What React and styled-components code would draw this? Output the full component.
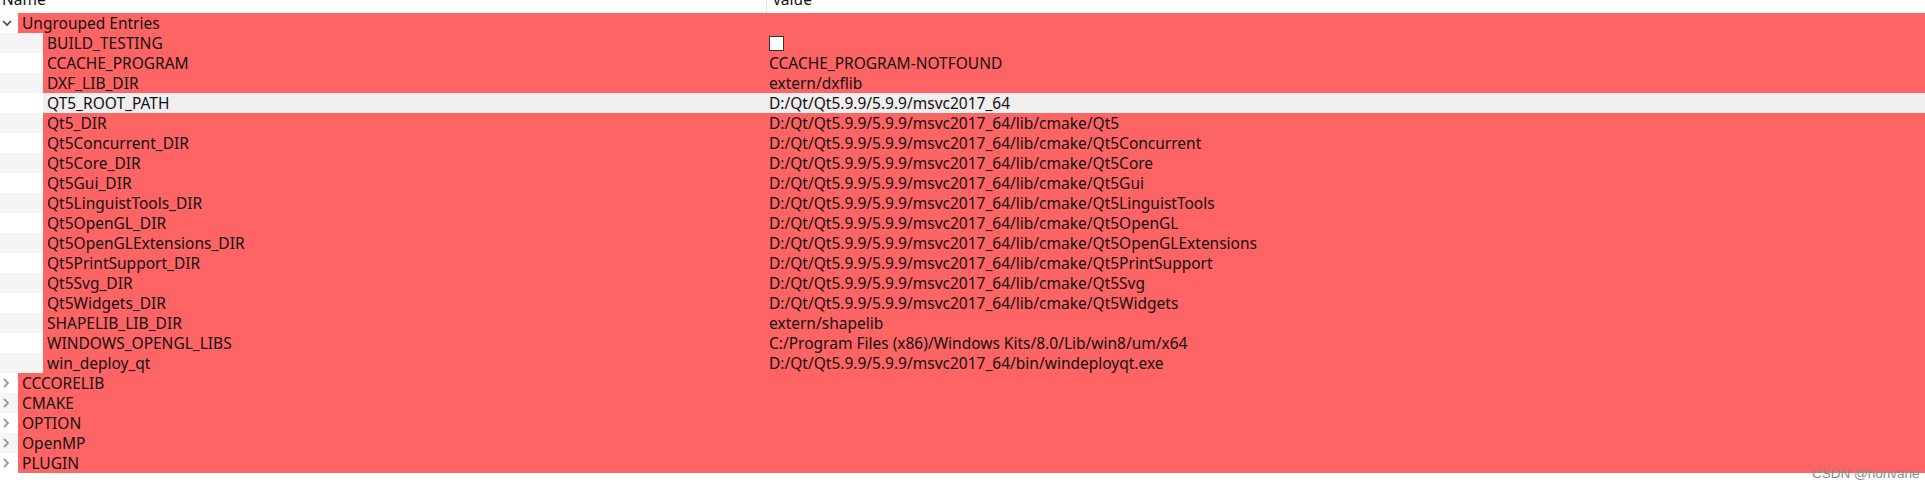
import React from 'react'
import styled, { createGlobalStyle } from 'styled-components'

const GlobalStyle = createGlobalStyle`
  html, body {
    margin: 0;
    padding: 0;
    background: #fff;
  }
  body {
    font-family: "Noto Sans", "Open Sans", sans-serif;
    font-size: 15.5px;
    color: #111;
  }
`

const NAME_COL = 766
const RED = '#ff6464'

const groups = [
  {
    name: 'Ungrouped Entries',
    open: true,
    entries: [
      { name: 'BUILD_TESTING', check: true },
      { name: 'CCACHE_PROGRAM', value: 'CCACHE_PROGRAM-NOTFOUND' },
      { name: 'DXF_LIB_DIR', value: 'extern/dxflib' },
      { name: 'QT5_ROOT_PATH', value: 'D:/Qt/Qt5.9.9/5.9.9/msvc2017_64', old: true },
      { name: 'Qt5_DIR', value: 'D:/Qt/Qt5.9.9/5.9.9/msvc2017_64/lib/cmake/Qt5' },
      { name: 'Qt5Concurrent_DIR', value: 'D:/Qt/Qt5.9.9/5.9.9/msvc2017_64/lib/cmake/Qt5Concurrent' },
      { name: 'Qt5Core_DIR', value: 'D:/Qt/Qt5.9.9/5.9.9/msvc2017_64/lib/cmake/Qt5Core' },
      { name: 'Qt5Gui_DIR', value: 'D:/Qt/Qt5.9.9/5.9.9/msvc2017_64/lib/cmake/Qt5Gui' },
      { name: 'Qt5LinguistTools_DIR', value: 'D:/Qt/Qt5.9.9/5.9.9/msvc2017_64/lib/cmake/Qt5LinguistTools' },
      { name: 'Qt5OpenGL_DIR', value: 'D:/Qt/Qt5.9.9/5.9.9/msvc2017_64/lib/cmake/Qt5OpenGL' },
      { name: 'Qt5OpenGLExtensions_DIR', value: 'D:/Qt/Qt5.9.9/5.9.9/msvc2017_64/lib/cmake/Qt5OpenGLExtensions' },
      { name: 'Qt5PrintSupport_DIR', value: 'D:/Qt/Qt5.9.9/5.9.9/msvc2017_64/lib/cmake/Qt5PrintSupport' },
      { name: 'Qt5Svg_DIR', value: 'D:/Qt/Qt5.9.9/5.9.9/msvc2017_64/lib/cmake/Qt5Svg' },
      { name: 'Qt5Widgets_DIR', value: 'D:/Qt/Qt5.9.9/5.9.9/msvc2017_64/lib/cmake/Qt5Widgets' },
      { name: 'SHAPELIB_LIB_DIR', value: 'extern/shapelib' },
      { name: 'WINDOWS_OPENGL_LIBS', value: 'C:/Program Files (x86)/Windows Kits/8.0/Lib/win8/um/x64' },
      { name: 'win_deploy_qt', value: 'D:/Qt/Qt5.9.9/5.9.9/msvc2017_64/bin/windeployqt.exe' },
    ],
  },
  { name: 'CCCORELIB' },
  { name: 'CMAKE' },
  { name: 'OPTION' },
  { name: 'OpenMP' },
  { name: 'PLUGIN' },
]

const Page = styled.div`
  position: relative;
  width: 1925px;
  height: 490px;
  overflow: hidden;
`

const Header = styled.div`
  display: grid;
  grid-template-columns: ${NAME_COL}px 1fr;
  height: 13px;
  overflow: hidden;
`

const HeaderCell = styled.div`
  height: 13px;
  line-height: 20px;
  padding-left: ${p => p.$pad}px;
  border-left: ${p => (p.$divider ? '1px solid #e5e5e5' : 'none')};
  span {
    display: block;
    margin-top: -11px;
  }
`

const Row = styled.div`
  display: flex;
  height: 20px;
  line-height: 20px;
`

const Gutter = styled.div`
  width: ${p => p.$w}px;
  flex-shrink: 0;
  background: ${p => (p.$stripe ? '#f5f5f5' : '#fff')};
  display: flex;
  align-items: center;
  padding-left: 2px;
  box-sizing: border-box;
`

const Body = styled.div`
  flex: 1;
  display: grid;
  grid-template-columns: ${p => NAME_COL - p.$indent}px 1fr;
  background: ${p => (p.$old ? '#efefef' : RED)};
`

const Cell = styled.div`
  padding-left: ${p => p.$pad}px;
  white-space: nowrap;
  overflow: hidden;
  display: flex;
  align-items: center;
`

const Check = styled.span`
  display: inline-block;
  width: 13px;
  height: 13px;
  margin-top: 1px;
  border: 1px solid #333;
  background: #fff;
`

const Watermark = styled.div`
  position: absolute;
  left: 1812px;
  top: 466px;
  font-family: "Liberation Sans", sans-serif;
  font-size: 13.5px;
  color: #8a8a8a;
`

const Chevron = ({ open }) =>
  open ? (
    <svg width="10" height="8" viewBox="0 0 10 8">
      <path d="M1 2 L5 6 L9 2" fill="none" stroke="#444" strokeWidth="1.6" />
    </svg>
  ) : (
    <svg width="8" height="10" viewBox="0 0 8 10">
      <path d="M2 1 L6 5 L2 9" fill="none" stroke="#9a9a9a" strokeWidth="1.8" />
    </svg>
  )

export default function App() {
  let idx = 0
  const rows = []
  groups.forEach(g => {
    const i = idx++
    rows.push(
      <Row key={g.name}>
        <Gutter $w={18} $stripe={i % 2 === 1}>
          <Chevron open={g.open} />
        </Gutter>
        <Body $indent={18}>
          <Cell $pad={4}>{g.name}</Cell>
          <Cell $pad={4} />
        </Body>
      </Row>
    )
    if (g.open) {
      g.entries.forEach(e => {
        const j = idx++
        rows.push(
          <Row key={e.name}>
            <Gutter $w={43} $stripe={j % 2 === 1} />
            <Body $indent={43} $old={e.old}>
              <Cell $pad={4}>{e.name}</Cell>
              <Cell $pad={3}>{e.check ? <Check /> : e.value}</Cell>
            </Body>
          </Row>
        )
      })
    }
  })

  return (
    <Page>
      <GlobalStyle />
      <Header>
        <HeaderCell $pad={2}><span>Name</span></HeaderCell>
        <HeaderCell $pad={6} $divider><span>value</span></HeaderCell>
      </Header>
      {rows}
      <Watermark>CSDN @honvane</Watermark>
    </Page>
  )
}
